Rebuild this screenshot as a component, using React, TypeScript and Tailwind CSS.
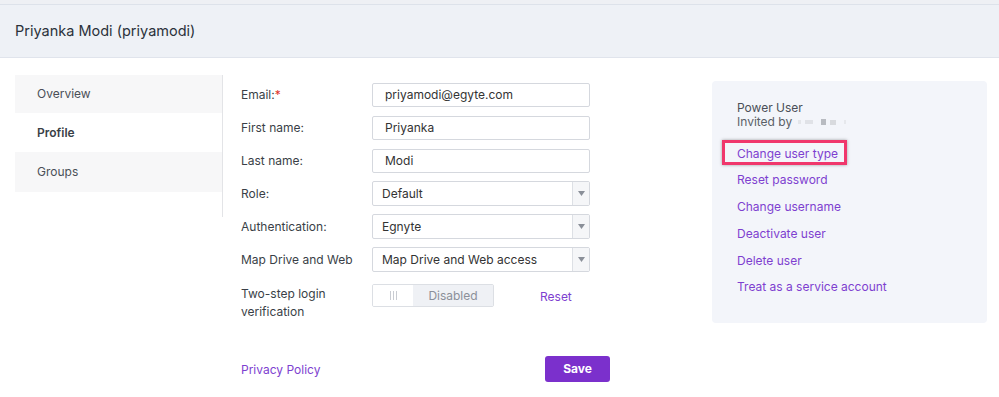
import React from "react";

const Caret = () => (
  <svg width="7" height="5" viewBox="0 0 7 5"><path d="M0 0 L7 0 L3.5 5 Z" fill="#8a8f98" /></svg>
);

function TextInput({ value }: { value: string }) {
  return (
    <div className="w-[218px] h-[24px] border border-[#d5d8de] rounded-[2px] bg-white flex items-center pl-[12px] text-[12px] text-[#333]">
      {value}
    </div>
  );
}

function SelectInput({ value }: { value: string }) {
  return (
    <div className="w-[218px] h-[25px] border border-[#d5d8de] rounded-[2px] bg-white flex items-stretch text-[12px] text-[#333]">
      <div className="flex-1 flex items-center pl-[9px]">{value}</div>
      <div className="w-[17px] border-l border-[#dde0e5] bg-[#f5f6f8] flex items-center justify-center">
        <Caret />
      </div>
    </div>
  );
}

function Row({ label, children, req }: { label: string; children: React.ReactNode; req?: boolean }) {
  return (
    <div className="flex items-center h-[25px]">
      <div className="w-[131px] text-[12px] text-[#3a3f47] pt-[1px]">
        {label}
        {req && <span className="text-[#e0332b]">*</span>}
      </div>
      {children}
    </div>
  );
}

export default function App() {
  const links = ["Reset password", "Change username", "Deactivate user", "Delete user", "Treat as a service account"];
  return (
    <div className="w-[999px] h-[397px] bg-white overflow-hidden font-['Inter',sans-serif] text-[#333]">
      <div className="h-[5px] bg-[#eef0f4] border-b border-[#dde2ea]" />
      <div className="h-[53px] bg-[#eef1f6] border-b border-[#e0e4ec] flex items-center pl-[15px] text-[14.5px] text-[#2b313b]">
        Priyanka Modi (priyamodi)
      </div>
      <div className="flex">
        <div className="mt-[17px] ml-[15px] w-[208px] h-[142px] border-r border-[#e3e4e7] text-[12px]">
          <div className="h-[38px] bg-[#f7f7f8] flex items-center pl-[22px] text-[#4a4f57]">Overview</div>
          <div className="h-[39px] bg-white flex items-center pl-[22px] font-semibold text-[#3a3f47]">Profile</div>
          <div className="h-[40px] bg-[#f7f7f8] flex items-center pl-[22px] text-[#4a4f57]">Groups</div>
        </div>
        <div className="mt-[24px] ml-[18px] w-[369px] flex flex-col">
          <div className="flex flex-col gap-[8px]">
            <Row label="Email:" req>
              <TextInput value="priyamodi@egyte.com" />
            </Row>
            <Row label="First name:">
              <TextInput value="Priyanka" />
            </Row>
            <Row label="Last name:">
              <TextInput value="Modi" />
            </Row>
            <Row label="Role:">
              <SelectInput value="Default" />
            </Row>
            <Row label="Authentication:">
              <SelectInput value="Egnyte" />
            </Row>
            <Row label="Map Drive and Web">
              <SelectInput value="Map Drive and Web access" />
            </Row>
          </div>
          <div className="flex items-start mt-[12px]">
            <div className="w-[131px] text-[12px] leading-[18px] text-[#3a3f47] pt-[1px]">
              Two-step login
              <br />
              verification
            </div>
            <div className="flex items-center">
              <div className="w-[122px] h-[23px] border border-[#dcdfe4] rounded-[2px] flex overflow-hidden">
                <div className="w-[40px] bg-white flex items-center justify-center gap-[2px]">
                  <span className="w-[1px] h-[9px] bg-[#c9ccd2]" />
                  <span className="w-[1px] h-[9px] bg-[#c9ccd2]" />
                  <span className="w-[1px] h-[9px] bg-[#c9ccd2]" />
                </div>
                <div className="flex-1 bg-[#eff1f5] flex items-center justify-center text-[12px] text-[#8b9099]">Disabled</div>
              </div>
              <span className="ml-[46px] mt-[2px] text-[12px] text-[#7e3fd0]">Reset</span>
            </div>
          </div>
          <div className="flex items-center justify-between mt-[35px]">
            <span className="text-[12px] text-[#7e3fd0] mt-[1px]">Privacy Policy</span>
            <button className="w-[65px] h-[26px] rounded-[3px] bg-[#7b30cc] text-white text-[12px] font-bold">Save</button>
          </div>
        </div>
        <div className="mt-[23px] ml-[102px] w-[275px] h-[242px] bg-[#f3f5fa] rounded-[4px] pt-[20px] pl-[25px] text-[12px]">
          <div className="leading-[14px] text-[#4a4f57]">Power User</div>
          <div className="leading-[14px] text-[#5a5f67] flex items-center">
            Invited by
            <span className="ml-[6px] inline-flex items-center gap-[4px]">
              <span className="w-[3px] h-[4px] bg-[#e4e6ea]" />
              <span className="w-[8px] h-[4px] bg-[#e0e2e7]" />
              <span className="w-[5px] h-[6px] bg-[#b8bbc1] ml-[4px]" />
              <span className="w-[6px] h-[5px] bg-[#d8dade]" />
              <span className="w-[2px] h-[4px] bg-[#e6e8ec] ml-[4px]" />
            </span>
          </div>
          <div className="mt-[11px] relative h-[27px] flex items-center text-[#7e3fd0]">
            Change user type
            <div className="absolute left-[-15px] top-[0px] w-[125px] h-[25px] border-[3px] border-[#f0376c] shadow-[0_0_3px_rgba(0,0,0,0.35)]" />
          </div>
          {links.map((l) => (
            <div key={l} className="h-[26.75px] flex items-center text-[#7e3fd0]">
              {l}
            </div>
          ))}
        </div>
      </div>
    </div>
  );
}
